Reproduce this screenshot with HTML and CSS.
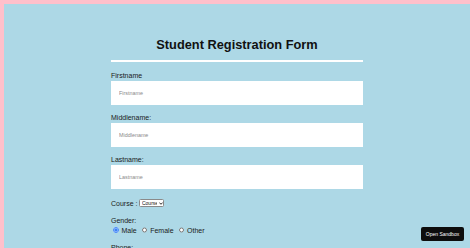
FILE: index.html
```html
<!DOCTYPE html>
<html>
<head>
<meta charset="utf-8">
<link rel="stylesheet" href="styles.css">
</head>
<body>
<div class="page">
  <form class="form">
    <h1 class="title">Student Registration Form</h1>
    <div class="field">
      <label class="label">Firstname</label>
      <input class="text" type="text" placeholder="Firstname">
    </div>
    <div class="field">
      <label class="label">Middlename:</label>
      <input class="text" type="text" placeholder="Middlename">
    </div>
    <div class="field">
      <label class="label">Lastname:</label>
      <input class="text" type="text" placeholder="Lastname">
    </div>
    <div class="row course">
      <span class="label-inline">Course :</span>
      <span class="select-wrap">
        <select class="select"><option>Course</option></select>
        <svg class="chev" viewBox="0 0 6 4" width="4" height="3"><path d="M0.6 0.6 L3 3.2 L5.4 0.6" fill="none" stroke="#111" stroke-width="1.3"/></svg>
      </span>
    </div>
    <div class="label gender-label">Gender:</div>
    <div class="row radios">
      <input class="radio" type="radio" name="g" checked><span class="rlabel">Male</span>
      <input class="radio" type="radio" name="g"><span class="rlabel">Female</span>
      <input class="radio" type="radio" name="g"><span class="rlabel">Other</span>
    </div>
    <div class="label phone-label">Phone:</div>
  </form>
</div>
<button class="sandbox">Open Sandbox</button>
</body>
</html>
```
FILE: styles.css
```css
html, body {
  margin: 0;
  padding: 0;
}
body {
  background: #ffc0cb;
  padding: 4px 4px 0 4px;
  font-family: "Liberation Sans", Arial, sans-serif;
  color: #1a1a1a;
  overflow: hidden;
  height: 244px;
}
.page {
  background: #add8e6;
  height: 244px;
  overflow: hidden;
}
.form {
  width: 252px;
  margin: 0 auto;
  padding-top: 33px;
  display: flex;
  flex-direction: column;
}
.title {
  margin: 0;
  font-size: 12.8px;
  line-height: 15px;
  font-weight: bold;
  text-align: center;
  color: #111;
  padding-bottom: 8px;
  border-bottom: 2px solid #fff;
  margin-bottom: 10px;
}
.field {
  display: flex;
  flex-direction: column;
  margin-bottom: 9px;
}
.label {
  display: block;
  font-size: 7px;
  line-height: 8px;
  margin-bottom: 1px;
}
.text {
  box-sizing: border-box;
  height: 24px;
  width: 100%;
  border: none;
  background: #fff;
  padding: 0 8px;
  margin: 0;
  font-size: 5.4px;
  font-family: "Liberation Sans", Arial, sans-serif;
  outline: none;
}
.text::placeholder {
  color: #8a8a8a;
}
.row {
  display: flex;
  align-items: center;
  height: 8px;
  font-size: 7px;
}
.course {
  margin-top: 1px;
  margin-bottom: 10px;
}
.label-inline {
  margin-right: 2px;
}
.select-wrap {
  position: relative;
  display: inline-flex;
}
.select {
  -webkit-appearance: none;
  appearance: none;
  box-sizing: border-box;
  font-size: 5px;
  line-height: 6px;
  height: 8px;
  width: 25px;
  padding: 0 6px 0 1.5px;
  margin: 0;
  border: 0.6px solid #8a8a8a;
  border-radius: 1.5px;
  background: #fff;
  color: #111;
  font-family: "Liberation Sans", Arial, sans-serif;
}
.chev {
  position: absolute;
  right: 1.5px;
  top: 2.6px;
}
.gender-label {
  margin-bottom: 1px;
}
.radios {
  margin-bottom: 10px;
}
.radio {
  width: 5.5px;
  height: 5.5px;
  margin: 0 3px 0 2px;
  accent-color: #3b82f6;
}
.rlabel {
  margin-right: 3px;
}
.sandbox {
  position: fixed;
  right: 10px;
  bottom: 7px;
  width: 43px;
  height: 14px;
  padding: 0;
  border: none;
  border-radius: 2px;
  background: #0d0d0d;
  color: #fff;
  font-size: 5px;
  font-family: "Liberation Sans", Arial, sans-serif;
}
```
